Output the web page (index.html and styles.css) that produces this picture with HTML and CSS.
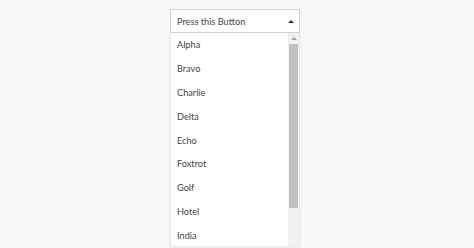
FILE: index.html
```html
<!DOCTYPE html>
<html>
<head>
<meta charset="utf-8">
<link rel="stylesheet" href="styles.css">
</head>
<body>
<div class="page">
  <div class="dropdown">
    <div class="toggle">
      <span class="label">Press this Button</span>
      <span class="caret"></span>
    </div>
    <div class="menu">
      <ul class="items">
        <li>Alpha</li>
        <li>Bravo</li>
        <li>Charlie</li>
        <li>Delta</li>
        <li>Echo</li>
        <li>Foxtrot</li>
        <li>Golf</li>
        <li>Hotel</li>
        <li>India</li>
      </ul>
      <div class="scrollbar">
        <div class="arrow"></div>
        <div class="thumb"></div>
      </div>
    </div>
  </div>
</div>
</body>
</html>
```
FILE: styles.css
```css
html, body {
  margin: 0;
  padding: 0;
  height: 100%;
  overflow: hidden;
}
body {
  background: #f7f7f7;
  font-family: Lato, "Open Sans", sans-serif;
  color: #444;
}
.page {
  padding: 9px 0 0 170px;
}
.dropdown {
  width: 130px;
  display: flex;
  flex-direction: column;
}
.toggle {
  height: 22px;
  border: 1px solid #d0d0d0;
  background: #fff;
  display: flex;
  align-items: center;
  justify-content: space-between;
  padding: 0 5px 0 6px;
  font-size: 9.2px;
}
.caret {
  width: 0;
  height: 0;
  border-left: 3px solid transparent;
  border-right: 3px solid transparent;
  border-bottom: 3px solid #333;
}
.menu {
  height: 213px;
  background: #fff;
  border-left: 1px solid #e6e6e6;
  border-right: 1px solid #e6e6e6;
  display: flex;
  box-shadow: 0 2px 3px rgba(0,0,0,0.06);
}
.items {
  list-style: none;
  margin: 0;
  padding: 0;
  flex: 1;
  overflow: hidden;
}
.items li {
  height: 23.9px;
  line-height: 23.9px;
  padding-left: 6px;
  font-size: 9.2px;
  color: #444;
}
.scrollbar {
  width: 11px;
  background: #f1f1f1;
  display: flex;
  flex-direction: column;
  align-items: center;
}
.arrow {
  margin-top: 4px;
  width: 0;
  height: 0;
  border-left: 3px solid transparent;
  border-right: 3px solid transparent;
  border-bottom: 3px solid #a3a3a3;
}
.thumb {
  margin-top: 4px;
  width: 9px;
  height: 164px;
  background: #c1c1c1;
}
```
